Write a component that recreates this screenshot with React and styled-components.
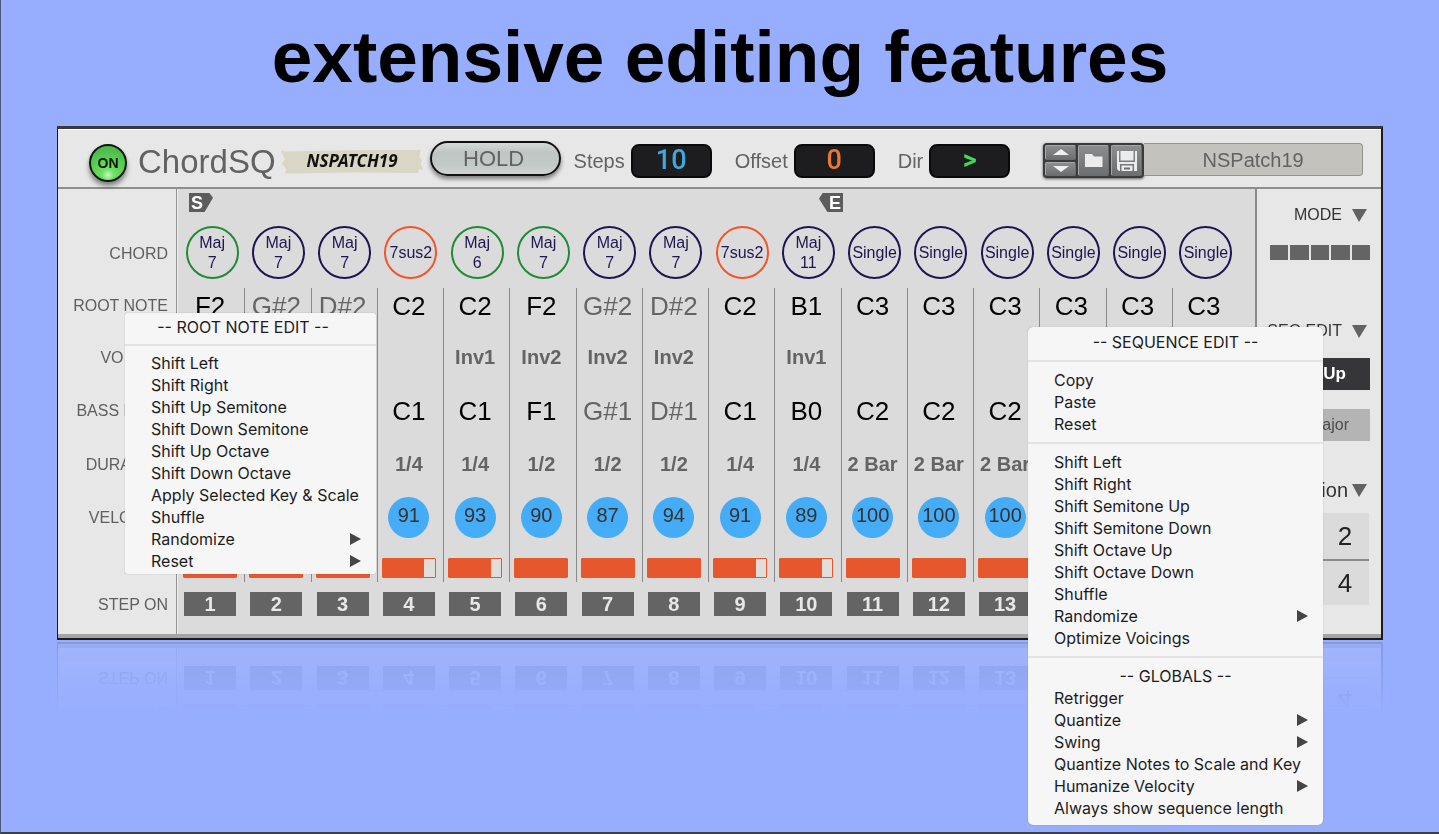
import React from 'react';
import styled, { createGlobalStyle, css } from 'styled-components';

const GlobalStyle = createGlobalStyle`
	* {
		box-sizing: border-box;
	}
	body {
		margin: 0;
		background: #97aeff;
		font-family: 'Liberation Sans', Arial, sans-serif;
	}
	button {
		font-family: inherit;
		padding: 0;
		border: none;
		background: none;
		cursor: pointer;
	}
`;

const Page = styled.main`
	min-height: 100vh;
	overflow: hidden;
	padding: 0 56px;
	border-left: 1px solid #4c5780;
	border-bottom: 2px solid #3c3f45;
`;

const Title = styled.h1`
	margin: 0;
	padding-top: 16px;
	height: 126px;
	font-size: 73px;
	line-height: 82px;
	font-weight: bold;
	text-align: center;
	color: #000;
`;

const Device = styled.div`
	position: relative;
`;

const Panel = styled.section`
	background: #e7e7e7;
	border: 2px solid #1b1b1b;
	border-left-width: 1px;
	border-top: 3px solid #3a3a3c;
	-webkit-box-reflect: below 2px linear-gradient(to top, rgba(0, 0, 0, 0.14), transparent 14%);
`;

const Header = styled.header`
	display: flex;
	align-items: center;
	height: 60px;
	padding: 0 18px 0 31px;
	border-top: 1px solid #fff;
	border-bottom: 2px solid #8e8e8e;
	color: #626262;
`;

const OnButton = styled.button`
	width: 38px;
	height: 38px;
	margin-top: 8px;
	border: 2px solid #0b1a0b;
	border-radius: 50%;
	background: radial-gradient(circle at 50% 85%, #c9f5c4 0, #6fe063 18%, #56cf52 50%, #4aa84a 100%);
	box-shadow: 0 4px 5px rgba(0, 0, 0, 0.45);
	font-size: 14px;
	font-weight: bold;
	color: #051305;
`;

const Brand = styled.div`
	margin-left: 11px;
	font-size: 33px;
	line-height: 40px;
	padding-top: 6px;
`;

const Tape = styled.div`
	width: 143px;
	height: 24px;
	margin: 6px 6px 0 5px;
	background: #dad6c5;
	clip-path: polygon(0 4%, 3% 8%, 60% 2%, 98% 0, 97% 30%, 99% 45%, 98% 60%, 100% 84%, 97% 82%, 96% 98%, 50% 96%, 3% 100%, 4% 80%, 1% 60%, 3% 40%);
	font-family: 'Noto Sans', sans-serif;
	font-size: 17px;
	line-height: 22px;
	font-weight: bold;
	font-style: italic;
	text-align: center;
	color: #111;
`;

const HoldButton = styled.button`
	width: 131px;
	height: 35px;
	border: 2px solid #111;
	border-radius: 18px;
	background: linear-gradient(#d5dad8, #bfc6c3 30%, #c3c9c6 70%, #cfd4d2);
	box-shadow: 0 3px 4px rgba(0, 0, 0, 0.45);
	font-size: 22px;
	color: #626262;
	padding-right: 3px;
`;

const Setting = styled.div`
	display: flex;
	align-items: center;
	gap: 6px;
	margin-left: ${({ $first }) => ($first ? 13 : 23)}px;
	padding-top: 5px;
	font-size: 20px;
`;

const Display = styled.output`
	width: 81px;
	height: 34px;
	border-radius: 8px;
	border: 2px solid #0a0a0a;
	background: #1d1d1f;
	font-family: Roboto, sans-serif;
	font-size: 27px;
	line-height: 29px;
	text-align: center;
	color: ${({ $color }) => $color};
	font-weight: ${({ $bold }) => ($bold ? 'bold' : 500)};
`;

const PatchBar = styled.div`
	flex: 1;
	display: flex;
	align-items: flex-start;
	margin-left: 33px;
	padding-top: 4px;
`;

const PatchButtons = styled.div`
	display: flex;
	gap: 2px;
	padding: 2px;
	height: 35px;
	border-radius: 4px;
	background: #3a3b3c;
	box-shadow: 0 1px 3px rgba(0, 0, 0, 0.6);
`;

const Spinner = styled.div`
	display: grid;
	gap: 2px;
	width: 31px;
`;

const PatchButton = styled.button`
	display: flex;
	align-items: center;
	justify-content: center;
	min-width: 31px;
	border: 1px solid #a5a7a8;
	border-right-color: #6a6c6d;
	border-bottom-color: #6a6c6d;
	border-radius: 2px;
	background: linear-gradient(#8b8d8e, #6c6e70);
`;

const PatchName = styled.div`
	flex: 1;
	height: 33px;
	border: 1px solid #94938f;
	border-left: none;
	border-radius: 0 4px 4px 0;
	background: #c4c2bd;
	font-size: 20px;
	line-height: 33px;
	text-align: center;
	color: #626262;
`;

const Body = styled.div`
	display: grid;
	grid-template-columns: 119px minmax(0, 1fr) 126px;
	border-bottom: 4px solid #a4a4a4;
`;

// chord row, six track rows and the step row share these heights
const rows = css`
	display: grid;
	grid-template-rows: ${({ $chord }) => ($chord ? '53px' : '')} 52px 52px 54px 54px 52px 49px 24px;
	align-items: center;
`;

const Labels = styled.div`
	${rows}
	padding: 38px 8px 17px 0;
	border-right: 1px solid #8f8f8f;
	font-size: 16px;
	text-align: right;
	color: #5f5f5f;
`;

const Sequencer = styled.div`
	padding: 4px 16px 0 1px;
	background: #dbdbdb;
	border-left: 1px solid #f0f0f0;
`;

const Markers = styled.div`
	display: grid;
	grid-template-columns: repeat(16, 1fr);
	height: 33px;
	padding-left: 4px;
`;

const Marker = styled.div`
	grid-column: ${({ $step }) => $step};
	justify-self: ${({ $end }) => ($end ? 'end' : 'start')};
	width: 24px;
	height: 19px;
	margin-left: ${({ $end }) => ($end ? 0 : 6)}px;
	padding: ${({ $end }) => ($end ? '0 2px 0 0' : '0 0 0 2px')};
	background: #5c5c5c;
	clip-path: ${({ $end }) =>
		$end ? 'polygon(15% 0, 100% 0, 100% 100%, 35% 100%, 0 30%)' : 'polygon(0 0, 85% 0, 100% 25%, 65% 100%, 0 100%)'};
	font-size: 18px;
	line-height: 20px;
	font-weight: bold;
	text-align: ${({ $end }) => ($end ? 'right' : 'left')};
	color: #fff;
`;

const Chords = styled.div`
	display: grid;
	grid-template-columns: repeat(16, 1fr);
	justify-items: center;
`;

const ringColors = { green: '#1f8b36', navy: '#1d1650', orange: '#f0562b' };

const Chord = styled.button`
	width: 53px;
	height: 53px;
	border: 2px solid ${({ $ring }) => ringColors[$ring]};
	border-radius: 50%;
	font-size: 16px;
	line-height: 20px;
	color: #1d1650;
	display: flex;
	align-items: center;
	justify-content: center;
	white-space: pre;
`;

const Steps = styled.div`
	display: grid;
	grid-template-columns: repeat(16, 1fr);
`;

const Step = styled.div`
	${rows}
	justify-items: center;
	padding-right: 4px;
	&:not(:last-child) {
		background: linear-gradient(#8a8a8a, #8a8a8a) right 9px / 1px 294px no-repeat;
	}
`;

const Note = styled.div`
	padding-top: 2px;
	font-size: 26px;
	color: ${({ $sharp }) => ($sharp ? '#646464' : '#000')};
`;

const Value = styled.div`
	font-size: 20px;
	font-weight: bold;
	color: #646464;
	white-space: nowrap;
`;

const Velocity = styled.button`
	width: 41px;
	height: 41px;
	border-radius: 50%;
	background: #45acf7;
	font-size: 20px;
	color: #333;
	padding-bottom: 4px;
`;

const Gate = styled.div`
	width: 54px;
	height: 20px;
	border: 1px solid #ea562b;
	border-radius: 1px;
	background: #e0dddb;
	& .fill {
		height: 100%;
		background: #e6572e;
	}
`;

const StepButton = styled.button`
	width: 52px;
	height: 24px;
	background: #646464;
	font-size: 20px;
	font-weight: bold;
	line-height: 22px;
	color: #e8e8e8;
`;

const Side = styled.aside`
	display: flex;
	flex-direction: column;
	align-items: flex-end;
	padding: 16px 11px 0 0;
	border-left: 2px solid #888;
	font-size: 16px;
	color: #333;
`;

const SideHeading = styled.button`
	display: flex;
	align-items: center;
	gap: ${({ $large }) => ($large ? 4 : 10)}px;
	padding-right: 3px;
	height: 20px;
	margin-top: ${({ $large }) => ($large ? 39 : 0)}px;
	font-size: ${({ $large }) => ($large ? 20 : 16)}px;
	color: #333;
`;

const Down = styled.span`
	border: 0 solid transparent;
	border-width: 13px 8px 0 7px;
	border-top-color: #626262;
`;

const ModeBars = styled.div`
	display: grid;
	grid-template-columns: repeat(5, 1fr);
	gap: 2px;
	width: 100px;
	height: 15px;
	margin: 20px 0 61px;
	& span {
		background: #646464;
	}
`;

const SideButton = styled.button`
	width: 100px;
	height: 32px;
	margin-top: ${({ $dark }) => ($dark ? 17 : 19)}px;
	padding-right: ${({ $dark }) => ($dark ? 24 : 21)}px;
	background: ${({ $dark }) => ($dark ? '#363638' : '#b4b4b4')};
	color: ${({ $dark }) => ($dark ? '#fff' : '#4c4c4c')};
	font-size: ${({ $dark }) => ($dark ? 17 : 16)}px;
	font-weight: ${({ $dark }) => ($dark ? 'bold' : 'normal')};
	text-align: right;
`;

const Signature = styled.div`
	width: 48px;
	margin: 13px 1px 0 0;
	font-size: 26px;
	line-height: 46px;
	text-align: center;
	background: #dbdbdb;
	color: #222;
	& div + div {
		border-top: 2px solid #8a8a8a;
		line-height: 44px;
	}
`;

const Menu = styled.div`
	position: absolute;
	width: ${({ $wide }) => ($wide ? 295 : 251)}px;
	padding: ${({ $wide }) => ($wide ? '4px 0 6px' : '3px 0 2px')};
	background: #f6f6f6;
	border-radius: ${({ $wide }) => ($wide ? '5px' : '2px')};
	box-shadow: 0 0 1px rgba(0, 0, 0, 0.4);
	font-family: Inter, Roboto, sans-serif;
	font-size: 16px;
	line-height: 22px;
	color: #1c1c1c;
	& hr {
		height: 2px;
		margin: ${({ $wide }) => ($wide ? 7 : 6)}px 0;
		border: none;
		background: #e3e3e3;
	}
`;

const RootMenu = styled(Menu)`
	left: 68px;
	top: 187px;
`;

const SequenceMenu = styled(Menu)`
	right: 60px;
	top: 201px;
`;

const MenuTitle = styled.div`
	text-align: center;
	padding-right: ${({ $inset }) => ($inset ? 0 : 15)}px;
`;

const MenuItem = styled.button`
	display: flex;
	align-items: center;
	justify-content: space-between;
	width: 100%;
	height: 22px;
	padding: 0 15px 0 26px;
	font-size: inherit;
	color: inherit;
	white-space: nowrap;
	& .arrow {
		border-left: 11px solid #454545;
		border-top: 6px solid transparent;
		border-bottom: 6px solid transparent;
	}
`;

const chords = [
	['Maj\n7', 'green'],
	['Maj\n7', 'navy'],
	['Maj\n7', 'navy'],
	['7sus2', 'orange'],
	['Maj\n6', 'green'],
	['Maj\n7', 'green'],
	['Maj\n7', 'navy'],
	['Maj\n7', 'navy'],
	['7sus2', 'orange'],
	['Maj\n11', 'navy'],
	...Array(6).fill(['Single', 'navy']),
];

const steps = [
	['F2', '', 'F1', '1/2', 90, 100],
	['G#2', '', 'G#1', '1/2', 90, 100],
	['D#2', '', 'D#1', '1/2', 90, 100],
	['C2', '', 'C1', '1/4', 91, 80],
	['C2', 'Inv1', 'C1', '1/4', 93, 80],
	['F2', 'Inv2', 'F1', '1/2', 90, 100],
	['G#2', 'Inv2', 'G#1', '1/2', 87, 100],
	['D#2', 'Inv2', 'D#1', '1/2', 94, 100],
	['C2', '', 'C1', '1/4', 91, 80],
	['B1', 'Inv1', 'B0', '1/4', 89, 80],
	...Array(6).fill(['C3', '', 'C2', '2 Bar', 100, 100]),
];

const labels = ['CHORD', 'ROOT NOTE', 'VOICING', 'BASS NOTE', 'DURATION', 'VELOCITY', 'GATE', 'STEP ON'];

const rootItems = [
	'Shift Left',
	'Shift Right',
	'Shift Up Semitone',
	'Shift Down Semitone',
	'Shift Up Octave',
	'Shift Down Octave',
	'Apply Selected Key & Scale',
	'Shuffle',
	'Randomize',
	'Reset',
];

const shiftItems = [
	'Shift Left',
	'Shift Right',
	'Shift Semitone Up',
	'Shift Semitone Down',
	'Shift Octave Up',
	'Shift Octave Down',
	'Shuffle',
	'Randomize',
	'Optimize Voicings',
];

const globalItems = [
	'Retrigger',
	'Quantize',
	'Swing',
	'Quantize Notes to Scale and Key',
	'Humanize Velocity',
	'Always show sequence length',
];

const Items = ({ items, submenus = [] }) =>
	items.map((item) => (
		<MenuItem key={item} role='menuitem'>
			{item}
			{submenus.includes(item) && <span className='arrow' />}
		</MenuItem>
	));

const TopBar = () => (
	<Header>
		<OnButton>ON</OnButton>
		<Brand>ChordSQ</Brand>
		<Tape>NSPATCH19</Tape>
		<HoldButton>HOLD</HoldButton>
		<Setting $first>
			Steps
			<Display $color='#3fa9dc'>10</Display>
		</Setting>
		<Setting>
			Offset
			<Display $color='#e87a2e'>0</Display>
		</Setting>
		<Setting>
			Dir
			<Display $color='#43d957' $bold>
				&gt;
			</Display>
		</Setting>
		<PatchBar>
			<PatchButtons>
				<Spinner>
					<PatchButton aria-label='Previous patch'>
						<svg width='16' height='6' viewBox='0 0 16 6'>
							<path d='M8 0L16 6H0Z' fill='#f0f0f0' />
						</svg>
					</PatchButton>
					<PatchButton aria-label='Next patch'>
						<svg width='16' height='6' viewBox='0 0 16 6'>
							<path d='M8 6L16 0H0Z' fill='#f0f0f0' />
						</svg>
					</PatchButton>
				</Spinner>
				<PatchButton aria-label='Open patch'>
					<svg width='18' height='15' viewBox='0 0 18 15'>
						<path d='M0 1H7L9 3.5H17.5V14H0Z' fill='#ececec' />
					</svg>
				</PatchButton>
				<PatchButton aria-label='Save patch'>
					<svg width='22' height='22' viewBox='0 0 22 22'>
						<path d='M1 1H3V12H19V1H21V21H18V14H4V21H3L1 19Z' fill='#ececec' />
						<path d='M4.5 1H17.5V10.5H4.5Z' fill='#ececec' />
						<path d='M5.5 15.5H16.5V21H5.5Z' fill='#ececec' />
						<path d='M8 17.5H14V19.5H8Z' fill='#6c6e70' />
					</svg>
				</PatchButton>
			</PatchButtons>
			<PatchName>NSPatch19</PatchName>
		</PatchBar>
	</Header>
);

const App = () => {
	return (
		<Page>
			<GlobalStyle />
			<Title>extensive editing features</Title>
			<Device>
				<Panel>
					<TopBar />
					<Body>
						<Labels $chord>
							{labels.map((label) => (
								<div key={label}>{label}</div>
							))}
						</Labels>
						<Sequencer>
							<Markers>
								<Marker $step={1}>S</Marker>
								<Marker $step={10} $end>
									E
								</Marker>
							</Markers>
							<Chords>
								{chords.map(([name, ring], i) => (
									<Chord key={i} $ring={ring}>
										{name}
									</Chord>
								))}
							</Chords>
							<Steps>
								{steps.map(([root, voicing, bass, duration, velocity, gate], i) => (
									<Step key={i}>
										<Note $sharp={root.includes('#')}>{root}</Note>
										<Value>{voicing}</Value>
										<Note $sharp={bass.includes('#')}>{bass}</Note>
										<Value>{duration}</Value>
										<Velocity>{velocity}</Velocity>
										<Gate>
											<div className='fill' style={{ width: `${gate}%` }} />
										</Gate>
										<StepButton>{i + 1}</StepButton>
									</Step>
								))}
							</Steps>
						</Sequencer>
						<Side>
							<SideHeading>
								MODE <Down />
							</SideHeading>
							<ModeBars>
								<span />
								<span />
								<span />
								<span />
								<span />
							</ModeBars>
							<SideHeading>
								SEQ EDIT <Down />
							</SideHeading>
							<SideButton $dark>Up</SideButton>
							<SideButton>Major</SideButton>
							<SideHeading $large>
								Motion <Down />
							</SideHeading>
							<Signature>
								<div>2</div>
								<div>4</div>
							</Signature>
						</Side>
					</Body>
				</Panel>
				<RootMenu role='menu'>
					<MenuTitle>-- ROOT NOTE EDIT --</MenuTitle>
					<hr />
					<Items items={rootItems} submenus={['Randomize', 'Reset']} />
				</RootMenu>
				<SequenceMenu role='menu' $wide>
					<MenuTitle $inset>-- SEQUENCE EDIT --</MenuTitle>
					<hr />
					<Items items={['Copy', 'Paste', 'Reset']} />
					<hr />
					<Items items={shiftItems} submenus={['Randomize']} />
					<hr />
					<MenuTitle $inset>-- GLOBALS --</MenuTitle>
					<Items items={globalItems} submenus={['Quantize', 'Swing', 'Humanize Velocity']} />
				</SequenceMenu>
			</Device>
		</Page>
	);
};

export default App;
